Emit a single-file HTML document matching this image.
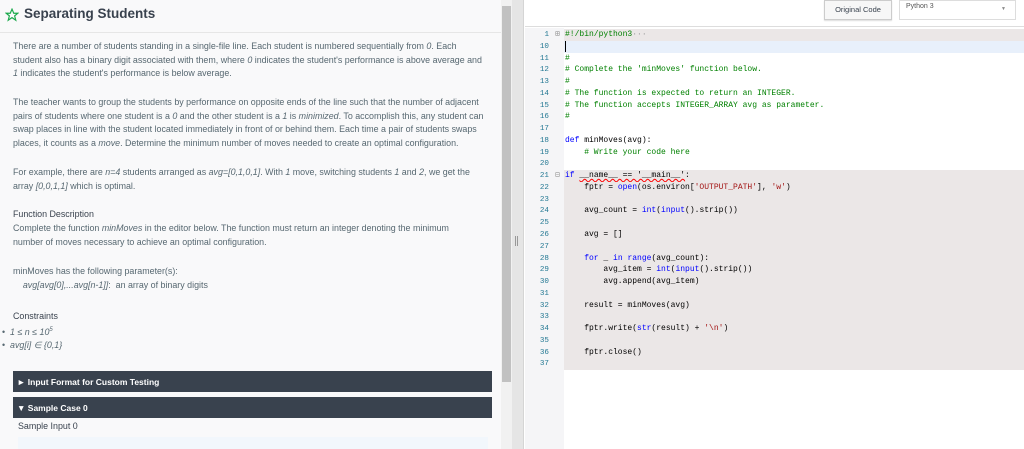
<!DOCTYPE html>
<html><head><meta charset="utf-8"><style>
*{margin:0;padding:0;box-sizing:border-box}
body{width:1024px;height:449px;overflow:hidden;background:#fff;font-family:"Liberation Sans",sans-serif;position:relative}
.l{position:absolute;left:0;top:0;width:501px;height:449px;background:#f9f9fa}
.hd{position:absolute;left:0;top:0;width:501px;height:33px;border-bottom:1px solid #e6e6e6}
.t{position:absolute;left:24px;top:6px;font-size:13.5px;font-weight:bold;color:#39424e}
.p{position:absolute;left:13px;font-size:8.9px;color:#576871;line-height:13.5px;white-space:nowrap}
.h{color:#39424e}
i{font-style:italic}
.bar{position:absolute;left:13px;width:479px;height:21px;background:#39424e;color:#fff;font-size:8.5px;font-weight:bold;padding:6px 0 0 4px}
.sb{position:absolute;left:501px;top:0;width:11px;height:449px;background:#f1f1f1}
.dv{position:absolute;left:512px;top:0;width:12px;height:449px;background:#e5e5e5;border-right:1px solid #d5d5d5}
.gut{position:absolute;left:525px;top:28px;width:39px;height:421px;background:#f5f5f7}
.top{position:absolute;left:525px;top:0;width:499px;height:27px;border-bottom:1px solid #ddd;background:#fff}
.code{position:absolute;left:525px;top:29px;width:499px;font-family:"Liberation Mono",monospace;font-size:8px;}
.r{height:11.78px;line-height:11.78px;white-space:pre;position:relative}
.n{display:inline-block;width:24px;text-align:right;color:#237893;font-size:7.6px}
.c{position:absolute;left:40px;top:0}
.g{background:linear-gradient(90deg,transparent 39px,#ebe7e7 39px)}
.cm{color:#008000}.k{color:#0000ff}.s{color:#a31515}
</style></head><body>
<div class="l">
<div class="hd"><svg style="position:absolute;left:5px;top:8px" width="14" height="14" viewBox="0 0 24 24"><path d="M12 2l3 7h7l-5.5 4.5 2 7.5L12 16.5 5.5 21l2-7.5L2 9h7z" fill="none" stroke="#1ba94c" stroke-width="2"/></svg><div class="t">Separating Students</div></div>
<div class="p" style="top:40px">There are a number of students standing in a single-file line. Each student is numbered sequentially from <i>0</i>. Each<br>student also has a binary digit associated with them, where <i>0</i> indicates the student's performance is above average and<br><i>1</i> indicates the student's performance is below average.</div>
<div class="p" style="top:96px">The teacher wants to group the students by performance on opposite ends of the line such that the number of adjacent<br>pairs of students where one student is a <i>0</i> and the other student is a <i>1</i> is <i>minimized</i>. To accomplish this, any student can<br>swap places in line with the student located immediately in front of or behind them. Each time a pair of students swaps<br>places, it counts as a <i>move</i>. Determine the minimum number of moves needed to create an optimal configuration.</div>
<div class="p" style="top:166px">For example, there are <i>n=4</i> students arranged as <i>avg=[0,1,0,1]</i>. With <i>1</i> move, switching students <i>1</i> and <i>2</i>, we get the<br>array <i>[0,0,1,1]</i> which is optimal.</div>
<div class="p h" style="top:208px">Function Description</div>
<div class="p" style="top:222px">Complete the function <i>minMoves</i> in the editor below. The function must return an integer denoting the minimum<br>number of moves necessary to achieve an optimal configuration.</div>
<div class="p" style="top:265px">minMoves has the following parameter(s):<br>&nbsp;&nbsp;&nbsp;&nbsp;<i>avg[avg[0],...avg[n-1]]</i>:&nbsp; an array of binary digits</div>
<div class="p h" style="top:310px">Constraints</div>
<div class="p" style="top:324px;left:2px">•&nbsp;&nbsp;<i>1 ≤ n ≤ 10<sup style="font-size:6px">5</sup></i><br>•&nbsp;&nbsp;<i>avg[i] ∈ {0,1}</i></div>
<div class="bar" style="top:371px">► Input Format for Custom Testing</div>
<div class="bar" style="top:397px">▼ Sample Case 0</div>
<div class="p h" style="top:420px;left:18px">Sample Input 0</div>
<div style="position:absolute;left:18px;top:437px;width:470px;height:12px;background:#f2f7fc"></div>
</div>
<div class="sb"><div style="position:absolute;left:1px;top:6px;width:9px;height:376px;background:#c1c1c1"></div></div>
<div class="dv"><div style="position:absolute;left:3px;top:236px;width:3px;height:10px;border-left:1px solid #999;border-right:1px solid #999"></div></div>
<div class="top">
<div style="position:absolute;left:299px;top:0;width:68px;height:20px;border:1px solid #ccc;background:#f7f7f7;font-size:7.5px;color:#39424e;text-align:center;line-height:18px;box-shadow:0 1px 1px #ddd">Original Code</div>
<div style="position:absolute;left:374px;top:0;width:117px;height:20px;border:1px solid #ddd;font-size:7px;color:#555;padding:2px 0 0 6px">Python 3<span style="position:absolute;right:9px;top:5px;font-size:5px;color:#888">▼</span></div>
</div>
<div class="gut"></div>
<div class="code">
<div class="r g"><span class="n">1</span><span class="c" style="left:30px;color:#999">⊞</span><span class="c cm">#!/bin/python3<span style="color:#999">···</span></span></div>
<div class="r" style="background:linear-gradient(90deg,transparent 39px,#e8f0fb 39px)"><span class="n">10</span><span class="c" style="border-left:1px solid #000;height:11px"></span></div>
<div class="r"><span class="n">11</span><span class="c cm">#</span></div>
<div class="r"><span class="n">12</span><span class="c cm"># Complete the 'minMoves' function below.</span></div>
<div class="r"><span class="n">13</span><span class="c cm">#</span></div>
<div class="r"><span class="n">14</span><span class="c cm"># The function is expected to return an INTEGER.</span></div>
<div class="r"><span class="n">15</span><span class="c cm"># The function accepts INTEGER_ARRAY avg as parameter.</span></div>
<div class="r"><span class="n">16</span><span class="c cm">#</span></div>
<div class="r"><span class="n">17</span></div>
<div class="r"><span class="n">18</span><span class="c"><span class="k">def</span> minMoves(avg):</span></div>
<div class="r"><span class="n">19</span><span class="c">    <span class="cm"># Write your code here</span></span></div>
<div class="r"><span class="n">20</span></div>
<div class="r g"><span class="n">21</span><span class="c" style="left:30px;color:#999">⊟</span><span class="c"><span class="k">if</span> <span style="text-decoration:underline wavy red">__name__ == '__main__'</span>:</span></div>
<div class="r g"><span class="n">22</span><span class="c">    fptr = <span class="k">open</span>(os.environ[<span class="s">'OUTPUT_PATH'</span>], <span class="s">'w'</span>)</span></div>
<div class="r g"><span class="n">23</span></div>
<div class="r g"><span class="n">24</span><span class="c">    avg_count = <span class="k">int</span>(<span class="k">input</span>().strip())</span></div>
<div class="r g"><span class="n">25</span></div>
<div class="r g"><span class="n">26</span><span class="c">    avg = []</span></div>
<div class="r g"><span class="n">27</span></div>
<div class="r g"><span class="n">28</span><span class="c">    <span class="k">for</span> _ <span class="k">in</span> <span class="k">range</span>(avg_count):</span></div>
<div class="r g"><span class="n">29</span><span class="c">        avg_item = <span class="k">int</span>(<span class="k">input</span>().strip())</span></div>
<div class="r g"><span class="n">30</span><span class="c">        avg.append(avg_item)</span></div>
<div class="r g"><span class="n">31</span></div>
<div class="r g"><span class="n">32</span><span class="c">    result = minMoves(avg)</span></div>
<div class="r g"><span class="n">33</span></div>
<div class="r g"><span class="n">34</span><span class="c">    fptr.write(<span class="k">str</span>(result) + <span class="s">'\n'</span>)</span></div>
<div class="r g"><span class="n">35</span></div>
<div class="r g"><span class="n">36</span><span class="c">    fptr.close()</span></div>
<div class="r g"><span class="n">37</span></div>
</div>
</body></html>
